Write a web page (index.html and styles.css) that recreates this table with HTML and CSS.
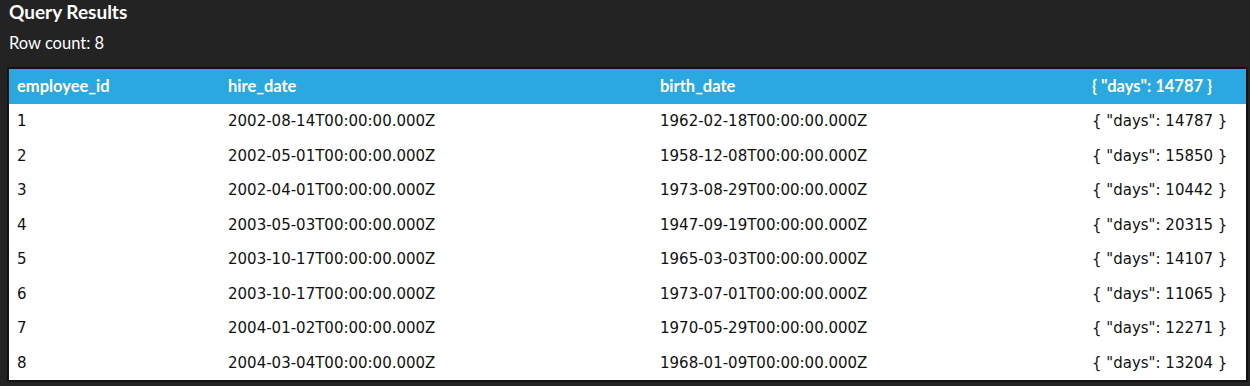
FILE: index.html
```html
<!DOCTYPE html>
<html lang="en">
<head>
    <meta charset="UTF-8">
    <title>Query Results</title>
    <link rel="stylesheet" href="styles.css">
</head>
<body>
    <div class="results">
        <h2 class="results-title">Query Results</h2>
        <p class="row-count">Row count: 8</p>
        <table class="results-table">
            <thead>
                <tr>
                    <th class="col-id">employee_id</th>
                    <th class="col-date">hire_date</th>
                    <th class="col-date">birth_date</th>
                    <th class="col-days">{ "days": 14787 }</th>
                </tr>
            </thead>
            <tbody>
                <tr><td>1</td><td>2002-08-14T00:00:00.000Z</td><td>1962-02-18T00:00:00.000Z</td><td>{ "days": 14787 }</td></tr>
                <tr><td>2</td><td>2002-05-01T00:00:00.000Z</td><td>1958-12-08T00:00:00.000Z</td><td>{ "days": 15850 }</td></tr>
                <tr><td>3</td><td>2002-04-01T00:00:00.000Z</td><td>1973-08-29T00:00:00.000Z</td><td>{ "days": 10442 }</td></tr>
                <tr><td>4</td><td>2003-05-03T00:00:00.000Z</td><td>1947-09-19T00:00:00.000Z</td><td>{ "days": 20315 }</td></tr>
                <tr><td>5</td><td>2003-10-17T00:00:00.000Z</td><td>1965-03-03T00:00:00.000Z</td><td>{ "days": 14107 }</td></tr>
                <tr><td>6</td><td>2003-10-17T00:00:00.000Z</td><td>1973-07-01T00:00:00.000Z</td><td>{ "days": 11065 }</td></tr>
                <tr><td>7</td><td>2004-01-02T00:00:00.000Z</td><td>1970-05-29T00:00:00.000Z</td><td>{ "days": 12271 }</td></tr>
                <tr><td>8</td><td>2004-03-04T00:00:00.000Z</td><td>1968-01-09T00:00:00.000Z</td><td>{ "days": 13204 }</td></tr>
            </tbody>
        </table>
    </div>
</body>
</html>
```

FILE: styles.css
```css
body {
    margin: 0;
    background-color: #232323;
    font-family: 'Lato', sans-serif;
    color: #fff;
}

.results {
    padding: 0 4px 4px 9px;
}

.results-title {
    font-size: 19px;
    font-weight: 700;
    margin: 0;
    line-height: 24px;
}

.row-count {
    display: block;
    font-size: 16.5px;
    margin: 0;
    padding-top: 9px;
    line-height: 20px;
    height: 45px;
    box-sizing: border-box;
}

.results-table {
    width: 100%;
    border-collapse: collapse;
    background: #fff;
    outline: 2px solid #111;
}

.results-table th {
    background: #2aa8df;
    color: #fff;
    font-weight: 700;
    font-size: 16.5px;
    text-align: left;
    padding: 8px;
    line-height: 19px;
}

.results-table td {
    font-family: 'DejaVu Sans', sans-serif;
    font-size: 15px;
    color: #111;
    padding: 8px;
    line-height: 18.5px;
}

.col-id {
    width: 195px;
}

.col-date {
    width: 416px;
}
```
